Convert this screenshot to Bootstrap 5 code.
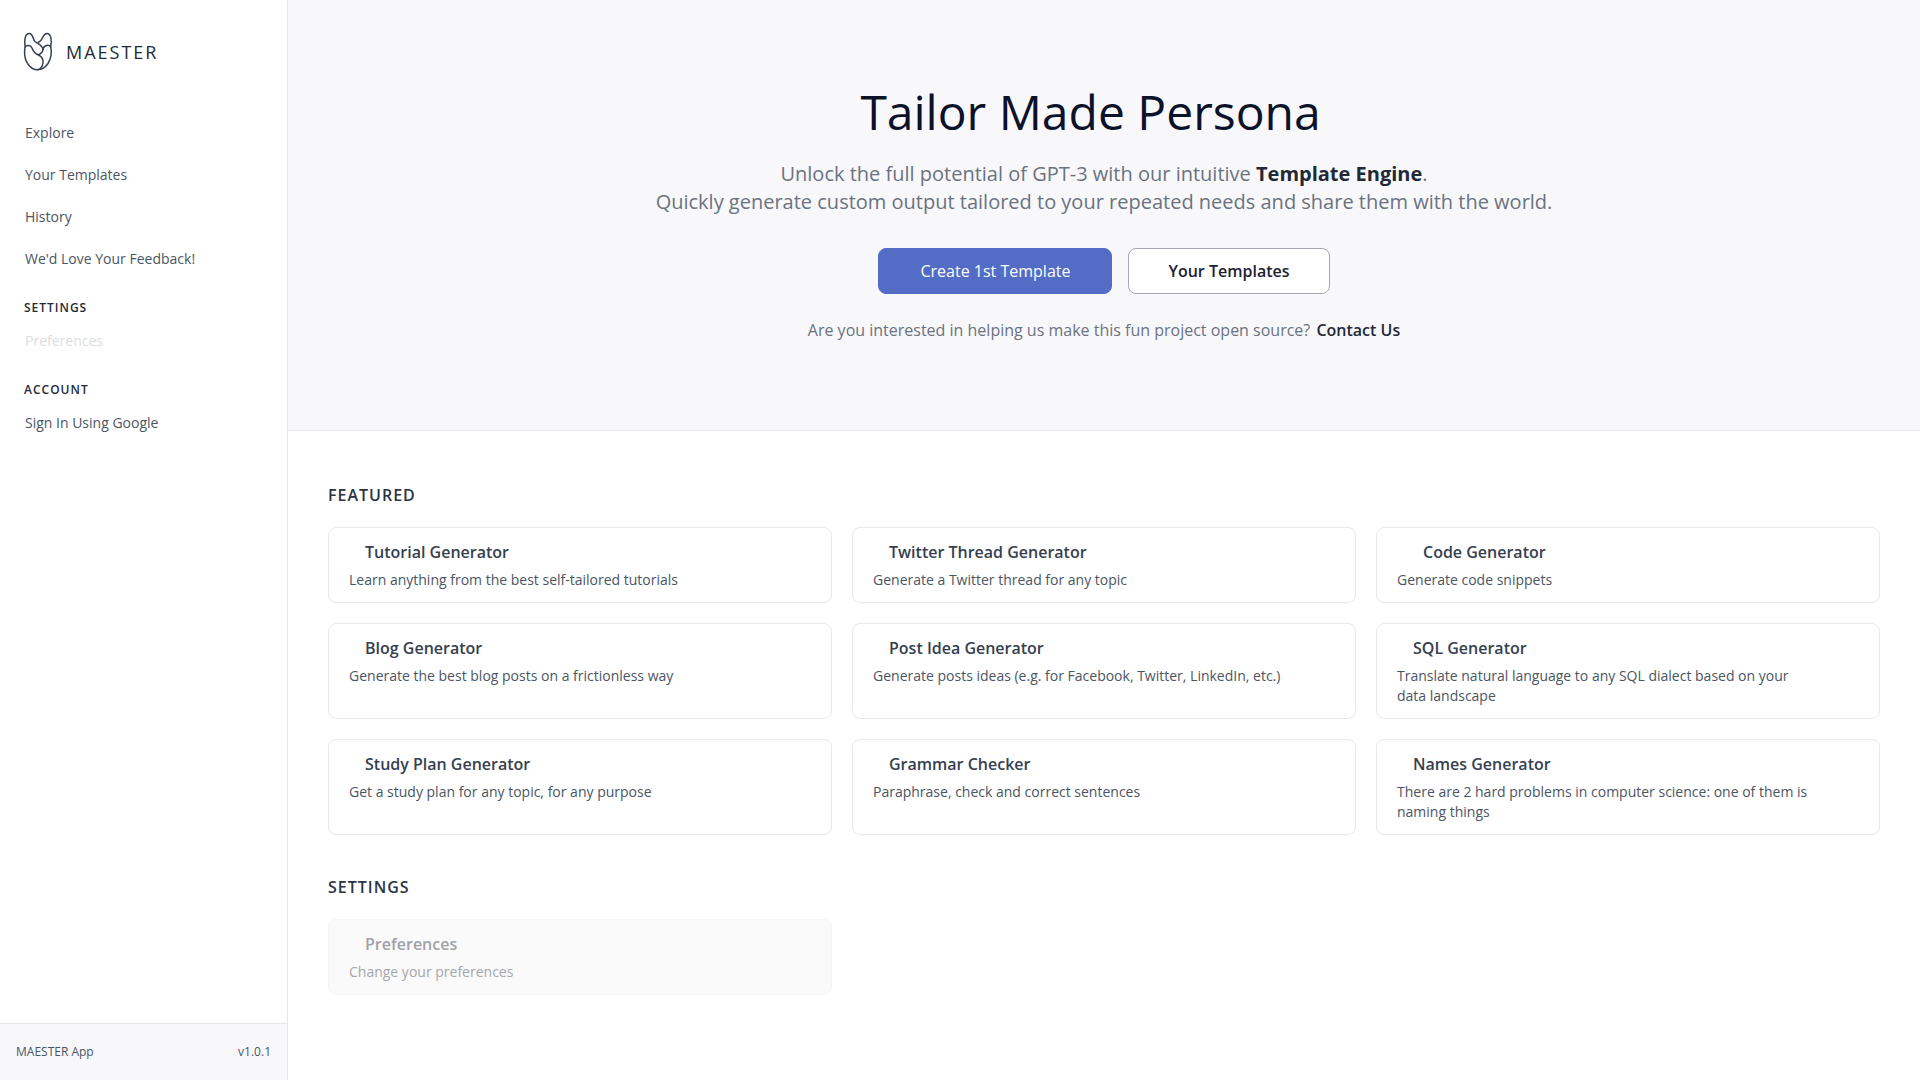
<!DOCTYPE html>
<html lang="en">
<head>
<meta charset="utf-8">
<meta name="viewport" content="width=device-width, initial-scale=1">
<title>MAESTER</title>
<link href="https://cdn.jsdelivr.net/npm/bootstrap@5.3.0/dist/css/bootstrap.min.css" rel="stylesheet">
<style>
body { font-family: "Open Sans", sans-serif; color: #1f2937; background: #fff; }
a { color: inherit; text-decoration: none; }
.side { width: 288px; border-right: 1px solid #e5e7eb; }
.brand { padding: 31px 24px 27px 22px; gap: 12px; font-size: 18px; line-height: 28px; letter-spacing: 2px; }
.side-nav { padding: 23px 24px 0; }
.side-nav .nav-link { padding: 0 1px; font-size: 14px; line-height: 20px; color: #4b5563; }
.side-nav .nav-link.disabled { color: #dcdee1; }
.side-nav .main-links { gap: 22px; margin-bottom: 31px; }
.side-nav h2 { font-size: 12px; line-height: 16px; font-weight: 600; letter-spacing: 1px; margin: 0 0 15px; }
.side-nav .group-links { margin-bottom: 31px; }
.side-foot { height: 57px; padding: 0 16px; font-size: 12px; line-height: 16px; color: #4b5563; background: #f8f8fb; border-top: 1px solid #e5e7eb; }
.hero { padding: 88px 24px 88px; background: #f8f8fb; border-bottom: 1px solid #e5e7eb; }
.hero h1 { font-size: 48px; line-height: 48px; font-weight: 400; color: #0b1229; margin: 0 27px 24px 0; }
.hero .pitch { font-size: 20px; line-height: 28px; color: #6b7280; margin-bottom: 32px; }
.hero .pitch strong { color: #1f2937; font-weight: 700; }
.hero .btn { padding: 10px 39px; font-size: 16px; line-height: 24px; font-weight: 600; border-radius: 8px; }
.hero .btn-create { --bs-btn-color: #fff; --bs-btn-bg: #536dc6; --bs-btn-border-color: #536dc6; --bs-btn-hover-color: #fff; --bs-btn-hover-bg: #435cb2; padding: 10px 41px; font-weight: 500; }
.btn-yours { --bs-btn-color: #1b2230; --bs-btn-bg: #fff; --bs-btn-border-color: #a5a8b0; --bs-btn-hover-bg: #f3f4f6; }
.hero .help { font-size: 16px; line-height: 24px; color: #6b7280; margin: 24px 0 0; }
.hero .help a { color: #1f2937; font-weight: 600; margin-left: 2px; }
.sections { padding: 52px 40px; }
.sections h2 { font-size: 16px; line-height: 24px; font-weight: 600; letter-spacing: 1px; margin: 0 0 20px; color: #2b3442; }
.tiles { display: grid; grid-template-columns: repeat(3, 1fr); gap: 20px; }
.tiles + h2 { margin-top: 40px; }
.tile { border: 1px solid #e8e9ec; border-radius: 8px; padding: 12px 64px 12px 20px; }
.tile h3 { font-size: 16px; line-height: 24px; font-weight: 600; margin: 0 0 6px; padding-left: 16px; color: #364050; }
.tile.wide-gap h3 { padding-left: 26px; }
.tile p { font-size: 14px; line-height: 20px; color: #4b5563; margin: 0; }
.tile.off { background: #fafafa; border-color: #f5f5f6; }
.tile.off h3 { color: #a0a2a6; }
.tile.off p { color: #a5a7ab; }
</style>
</head>
<body>
<div class="d-flex min-vh-100">
  <aside class="side d-flex flex-column flex-shrink-0">
    <a href="#" class="brand d-flex align-items-center">
      <svg width="32" height="42" viewBox="0 1 32 42" fill="none" stroke="#374151" stroke-width="1.5" stroke-linecap="round" stroke-linejoin="round" aria-hidden="true">
        <path d="M3.200 17C2 10 3 3.500 7.200 3.400C11.500 3.300 10.500 9.500 13 11.500C17 14.500 21 16 21 19.500C21 22 19 23.500 16.500 25"/>
        <path d="M16.500 12.300C21 11 20.500 3.400 24.800 3.400C29.200 3.400 30 10 28.600 17"/>
        <path d="M3.200 17C4.200 15 8.500 14.500 10 18C11.200 21.500 13 23.500 16.500 25C20 26.800 21.500 29.500 21 33C20.500 37 18 39.700 15.500 39.700C8.500 39.700 2.600 32 2.600 23C2.600 20 2.700 18 3.200 17Z"/>
        <path d="M21 19.500C21.500 15 27.200 14 28.600 17C30.200 22 29 29 26 33.500C23.500 37 20 39.700 15.500 39.700"/>
      </svg>
      <span>MAESTER</span>
    </a>
    <div class="side-nav flex-grow-1">
      <nav class="nav main-links flex-column">
        <a class="nav-link" href="#">Explore</a>
        <a class="nav-link" href="#">Your Templates</a>
        <a class="nav-link" href="#">History</a>
        <a class="nav-link" href="#">We'd Love Your Feedback!</a>
      </nav>
      <h2>SETTINGS</h2>
      <nav class="nav group-links flex-column"><a class="nav-link disabled" aria-disabled="true">Preferences</a></nav>
      <h2>ACCOUNT</h2>
      <nav class="nav group-links flex-column"><a class="nav-link" href="#">Sign In Using Google</a></nav>
    </div>
    <footer class="side-foot d-flex justify-content-between align-items-center"><span>MAESTER App</span><span>v1.0.1</span></footer>
  </aside>
  <main class="flex-grow-1">
    <section class="hero text-center">
      <h1>Tailor Made Persona</h1>
      <p class="pitch">Unlock the full potential of GPT-3 with our intuitive <strong>Template Engine</strong>.<br>Quickly generate custom output tailored to your repeated needs and share them with the world.</p>
      <div class="d-flex justify-content-center gap-3">
        <button type="button" class="btn btn-create">Create 1st Template</button>
        <button type="button" class="btn btn-yours">Your Templates</button>
      </div>
      <p class="help">Are you interested in helping us make this fun project open source? <a href="#">Contact Us</a></p>
    </section>
    <section class="sections">
      <h2>FEATURED</h2>
      <div class="tiles">
        <a href="#" class="tile"><h3>Tutorial Generator</h3><p>Learn anything from the best self-tailored tutorials</p></a>
        <a href="#" class="tile"><h3>Twitter Thread Generator</h3><p>Generate a Twitter thread for any topic</p></a>
        <a href="#" class="tile wide-gap"><h3>Code Generator</h3><p>Generate code snippets</p></a>
        <a href="#" class="tile"><h3>Blog Generator</h3><p>Generate the best blog posts on a frictionless way</p></a>
        <a href="#" class="tile"><h3>Post Idea Generator</h3><p>Generate posts ideas (e.g. for Facebook, Twitter, LinkedIn, etc.)</p></a>
        <a href="#" class="tile"><h3>SQL Generator</h3><p>Translate natural language to any SQL dialect based on your data landscape</p></a>
        <a href="#" class="tile"><h3>Study Plan Generator</h3><p>Get a study plan for any topic, for any purpose</p></a>
        <a href="#" class="tile"><h3>Grammar Checker</h3><p>Paraphrase, check and correct sentences</p></a>
        <a href="#" class="tile"><h3>Names Generator</h3><p>There are 2 hard problems in computer science: one of them is naming things</p></a>
      </div>
      <h2>SETTINGS</h2>
      <div class="tiles">
        <div class="tile off"><h3>Preferences</h3><p>Change your preferences</p></div>
      </div>
    </section>
  </main>
</div>
<script src="https://cdn.jsdelivr.net/npm/bootstrap@5.3.0/dist/js/bootstrap.bundle.min.js"></script>
</body>
</html>
